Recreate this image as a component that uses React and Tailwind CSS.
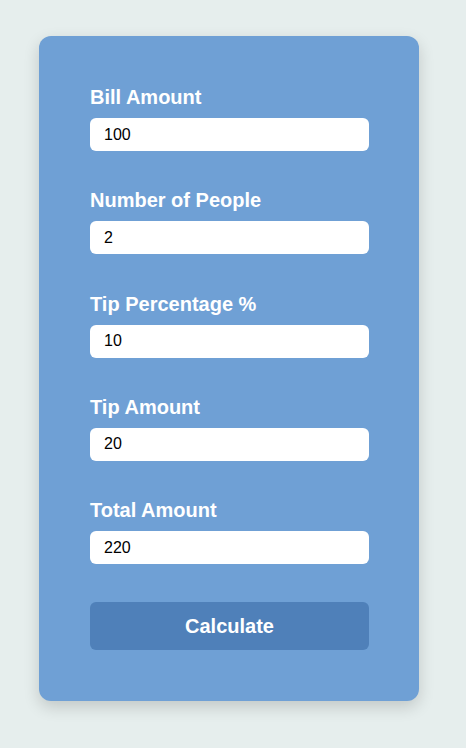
import { useState } from "react"

const FIELDS = [
  { key: "bill", label: "Bill Amount" },
  { key: "people", label: "Number of People" },
  { key: "tip", label: "Tip Percentage %" },
  { key: "tipAmount", label: "Tip Amount" },
  { key: "total", label: "Total Amount" },
]

export default function App() {
  const [values, setValues] = useState({
    bill: "100",
    people: "2",
    tip: "10",
    tipAmount: "20",
    total: "220",
  })

  function update(key, v) {
    setValues((s) => ({ ...s, [key]: v }))
  }

  function calculate() {
    const bill = parseFloat(values.bill) || 0
    const tip = parseFloat(values.tip) || 0
    const tipAmount = (bill * tip) / 100
    setValues((s) => ({ ...s, tipAmount: String(tipAmount), total: String(bill + tipAmount) }))
  }

  return (
    <div
      className="min-h-[748px] bg-[#e6eeed] pt-[36px] pl-[39px]"
      style={{ fontFamily: '"Liberation Sans", Arial, sans-serif' }}
    >
      <div className="w-[380px] rounded-[12px] bg-[#6fa0d5] pt-[50px] pb-[51px] pl-[51px] pr-[50px] shadow-[0_6px_16px_rgba(0,0,0,0.16)]">
        {FIELDS.map((f) => (
          <div key={f.key} className="mb-[38.25px] flex flex-col">
            <label className="mb-[9px] text-[20px] leading-[23px] font-bold text-white">
              {f.label}
            </label>
            <input
              value={values[f.key]}
              onChange={(e) => update(f.key, e.target.value)}
              className="h-[33px] w-full rounded-[6px] bg-white pl-[14px] pr-[13px] text-[16px] text-black outline-none"
            />
          </div>
        ))}
        <button
          onClick={calculate}
          className="block h-[48px] w-full rounded-[6px] bg-[#4f80b9] text-[20px] font-bold text-white"
        >
          Calculate
        </button>
      </div>
    </div>
  )
}
